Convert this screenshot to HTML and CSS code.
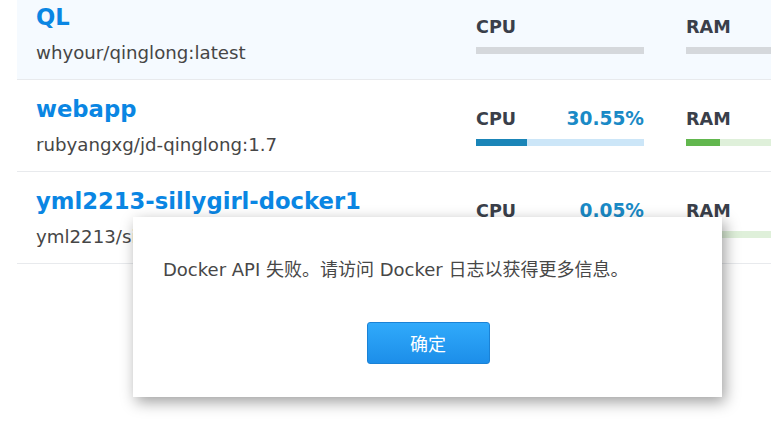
FILE: index.html
```html
<!DOCTYPE html>
<html lang="zh-CN">
<head>
<meta charset="utf-8">
<title>Docker</title>
<link rel="stylesheet" href="styles.css">
</head>
<body>
<div class="list">
  <div class="row row-active">
    <div class="name">
      <div class="title">QL</div>
      <div class="image">whyour/qinglong:latest</div>
    </div>
    <div class="metric">
      <div class="metric-head"><span class="label">CPU</span><span class="value"></span></div>
      <div class="bar bar-off"></div>
    </div>
    <div class="metric">
      <div class="metric-head"><span class="label">RAM</span><span class="value"></span></div>
      <div class="bar bar-off"></div>
    </div>
  </div>
  <div class="row">
    <div class="name">
      <div class="title">webapp</div>
      <div class="image">rubyangxg/jd-qinglong:1.7</div>
    </div>
    <div class="metric">
      <div class="metric-head"><span class="label">CPU</span><span class="value">30.55%</span></div>
      <div class="bar bar-cpu"><div class="fill" style="width:30.55%"></div></div>
    </div>
    <div class="metric">
      <div class="metric-head"><span class="label">RAM</span><span class="value"></span></div>
      <div class="bar bar-ram"><div class="fill" style="width:20%"></div></div>
    </div>
  </div>
  <div class="row">
    <div class="name">
      <div class="title">yml2213-sillygirl-docker1</div>
      <div class="image">yml2213/sillygirl-docker:latest</div>
    </div>
    <div class="metric">
      <div class="metric-head"><span class="label">CPU</span><span class="value">0.05%</span></div>
      <div class="bar bar-cpu"><div class="fill" style="width:0.5%"></div></div>
    </div>
    <div class="metric">
      <div class="metric-head"><span class="label">RAM</span><span class="value"></span></div>
      <div class="bar bar-ram"><div class="fill" style="width:3%"></div></div>
    </div>
  </div>
</div>

<div class="dialog">
  <div class="message">Docker API 失败。请访问 Docker 日志以获得更多信息。</div>
  <div class="actions"><button class="btn">确定</button></div>
</div>
</body>
</html>
```

FILE: styles.css
```css
html, body {
  margin: 0;
  padding: 0;
  background: #ffffff;
  overflow: hidden;
  height: 429px;
}

body {
  font-family: "DejaVu Sans", Verdana, "Noto Sans CJK SC", sans-serif;
  position: relative;
}

.list {
  margin-left: 17px;
  margin-top: -12px;
}

.row {
  display: flex;
  height: 91px;
  border-bottom: 1px solid #e8eaed;
  padding-left: 19px;
  background: #ffffff;
}

.row-active {
  background: #f5faff;
}

.name {
  width: 440px;
  flex: none;
  padding-top: 14px;
}

.title {
  font-size: 22.7px;
  font-weight: bold;
  color: #0a86e3;
  line-height: 30px;
  white-space: nowrap;
}

.image {
  font-size: 18.2px;
  color: #464646;
  line-height: 22px;
  margin-top: 10px;
  white-space: nowrap;
}

.metric {
  width: 168px;
  flex: none;
  margin-right: 42px;
  padding-top: 29px;
}

.metric-head {
  display: flex;
  justify-content: space-between;
  align-items: baseline;
  font-weight: bold;
  line-height: 20px;
  height: 20px;
}

.label {
  color: #3a3f4a;
  font-size: 17.6px;
}

.value {
  color: #1a8ac6;
  font-size: 18.6px;
}

.bar {
  margin-top: 10px;
  height: 7px;
  display: flex;
}

.bar-off {
  background: #d5d8dc;
}

.bar-cpu {
  background: #cce6f8;
}

.bar-cpu .fill {
  background: #1a85b8;
}

.bar-ram {
  background: #dff0da;
}

.bar-ram .fill {
  background: #62b74e;
}

.dialog {
  position: absolute;
  left: 133px;
  top: 217px;
  width: 589px;
  height: 180px;
  background: #ffffff;
  box-shadow: 3px 5px 14px rgba(0, 0, 0, 0.38);
  box-sizing: border-box;
  padding: 42px 30px 0;
}

.message {
  font-family: "DejaVu Sans", Verdana, "Noto Sans CJK SC", sans-serif;
  font-size: 18px;
  color: #474747;
  line-height: 22px;
  white-space: nowrap;
}

.actions {
  display: flex;
  justify-content: center;
  margin-top: 41px;
}

.btn {
  width: 123px;
  height: 42px;
  border: 1px solid #1a82d6;
  border-radius: 3px;
  background: linear-gradient(#30aafb, #1c8ee9);
  color: #ffffff;
  font-family: "Noto Sans CJK SC", sans-serif;
  font-size: 18px;
  padding: 0;
  margin-left: 1px;
}
```
